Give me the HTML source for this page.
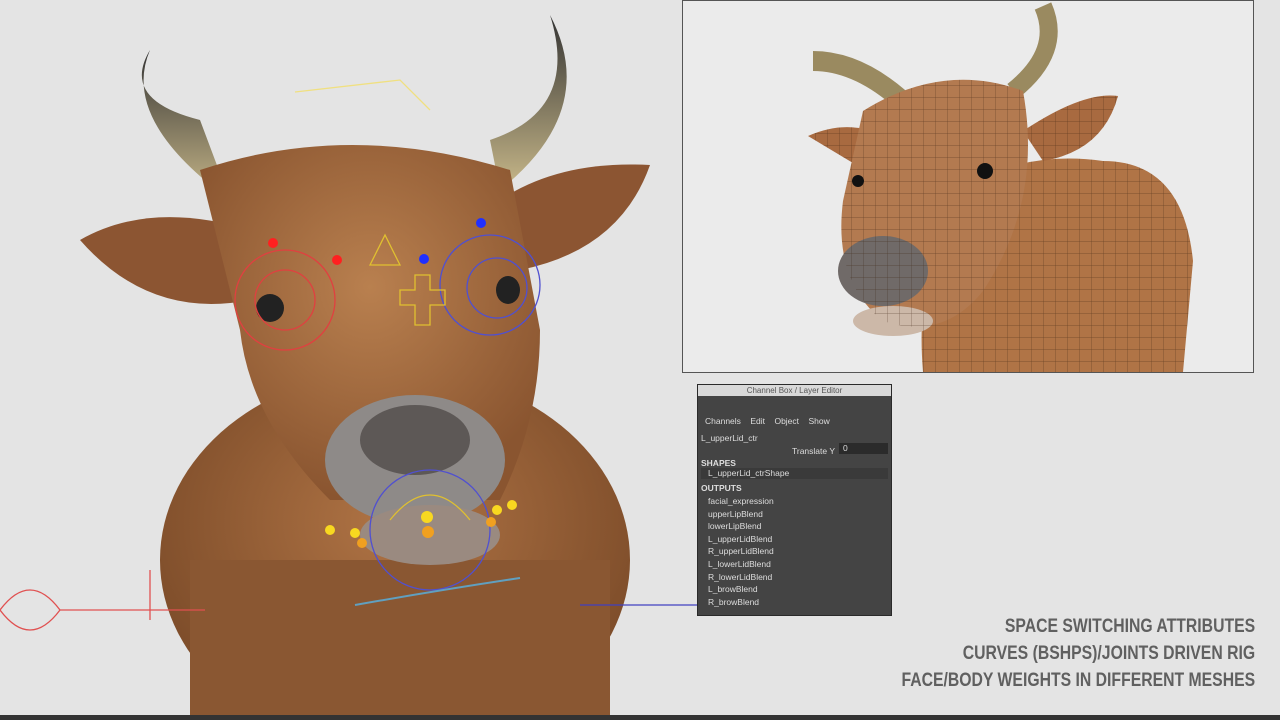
<!DOCTYPE html>
<html><head><meta charset="utf-8"><style>
body{margin:0;width:1280px;height:720px;overflow:hidden;background:#e4e4e4;font-family:"Liberation Sans",sans-serif;position:relative}
svg{position:absolute;left:0;top:0}
#inset{position:absolute;left:682px;top:0;width:570px;height:371px;border:1px solid #555;background:#ebebeb;overflow:hidden}
#cb{position:absolute;left:697px;top:384px;width:193px;height:230px;background:#444;border:1px solid #2a2a2a;color:#ddd;font-size:8.5px}
#cb .tb{height:11px;background:#d9d9d9;color:#555;text-align:center;font-size:8px;line-height:11px}
#cb div.r{position:absolute;left:10px}
#txt{position:absolute;right:25px;top:613px;text-align:right;color:#606060;font-weight:bold;font-size:19px;line-height:27px;transform:scaleX(0.83);transform-origin:right top;white-space:nowrap}
</style></head><body>
<svg width="1280" height="720" viewBox="0 0 1280 720">
<defs>
<radialGradient id="bd" cx="0.5" cy="0.4" r="0.6"><stop offset="0" stop-color="#b07445"/><stop offset="1" stop-color="#7a4a28"/></radialGradient>
<radialGradient id="hd" cx="0.5" cy="0.4" r="0.6"><stop offset="0" stop-color="#b9804f"/><stop offset="1" stop-color="#8a5530"/></radialGradient>
<linearGradient id="hn" x1="0" y1="1" x2="0" y2="0"><stop offset="0" stop-color="#c9b98a"/><stop offset="1" stop-color="#333"/></linearGradient>
</defs>
<ellipse cx="395" cy="560" rx="235" ry="190" fill="url(#bd)"/>
<rect x="190" y="560" width="420" height="160" fill="#8a5732"/>
<path d="M200 120 Q120 100 150 50 Q120 120 230 200 Z" fill="url(#hn)"/>
<path d="M490 140 Q580 110 550 15 Q600 110 500 190 Z" fill="url(#hn)"/>
<path d="M80 240 Q150 200 250 230 L250 300 Q150 320 80 240Z" fill="#8c5532"/>
<path d="M650 165 Q560 160 500 200 L520 270 Q620 250 650 165Z" fill="#8c5532"/>
<path d="M200 170 Q350 120 510 170 L540 330 Q540 420 500 500 L330 500 Q250 420 240 330 Z" fill="url(#hd)"/>
<ellipse cx="415" cy="460" rx="90" ry="65" fill="#8e8a88"/>
<ellipse cx="415" cy="440" rx="55" ry="35" fill="#5d5856"/>
<ellipse cx="430" cy="535" rx="70" ry="30" fill="#9a8a80"/>
<ellipse cx="270" cy="308" rx="14" ry="14" fill="#222"/>
<ellipse cx="508" cy="290" rx="12" ry="14" fill="#222"/>
<g fill="none" stroke-width="1.3">
<circle cx="285" cy="300" r="50" stroke="#e04040"/><circle cx="285" cy="300" r="30" stroke="#e04040"/>
<circle cx="490" cy="285" r="50" stroke="#5050d0"/><circle cx="497" cy="288" r="30" stroke="#5050d0"/>
<circle cx="430" cy="530" r="60" stroke="#5050d0"/>
<path d="M400 290h15v-15h15v15h15v15h-15v20h-15v-20h-15z" stroke="#e0c030"/>
<path d="M370 265l15-30 15 30z" stroke="#e0c030"/>
<path d="M390 520 Q430 470 470 520" stroke="#e0c030"/>
<path d="M355 605 Q440 590 520 578" stroke="#60a0c0" stroke-width="2"/>
<path d="M0 610 Q30 570 60 610 Q30 650 0 610M60 610H205M150 570v50" stroke="#e05050"/>
<path d="M580 605H700" stroke="#4040c0"/>
<path d="M295 92L400 80 430 110" stroke="#f0e080"/>
</g>
<g fill="#ff2020"><circle cx="273" cy="243" r="5"/><circle cx="337" cy="260" r="5"/></g>
<g fill="#2030ff"><circle cx="424" cy="259" r="5"/><circle cx="481" cy="223" r="5"/></g>
<g fill="#f8d820"><circle cx="330" cy="530" r="5"/><circle cx="355" cy="533" r="5"/><circle cx="427" cy="517" r="6"/><circle cx="497" cy="510" r="5"/><circle cx="512" cy="505" r="5"/></g>
<g fill="#f0a020"><circle cx="428" cy="532" r="6"/><circle cx="362" cy="543" r="5"/><circle cx="491" cy="522" r="5"/></g>
<rect x="0" y="715" width="1280" height="5" fill="#333"/>
</svg>
<div id="inset">
<svg width="570" height="371">
<defs><pattern id="g" width="12" height="12" patternUnits="userSpaceOnUse"><path d="M12 0H0V12" fill="none" stroke="#3a2210" stroke-width="0.7"/></pattern>
<clipPath id="cc"><path d="M240 371 Q230 250 290 180 Q350 150 420 160 Q500 160 510 260 L500 371Z"/><path d="M180 110 Q260 60 340 90 Q360 200 300 290 Q260 340 200 320 Q150 280 160 200Z"/><path d="M125 135 Q170 115 210 140 L200 180Z"/><path d="M435 95 Q400 90 340 130 L360 160 Q420 150 435 95Z"/></clipPath></defs>
<path d="M240 371 Q230 250 290 180 Q350 150 420 160 Q500 160 510 260 L500 371Z" fill="#b07446"/>
<path d="M130 60 Q180 60 230 110" stroke="#9a8a60" stroke-width="20" fill="none"/>
<path d="M330 90 Q380 50 360 5" stroke="#9a8a60" stroke-width="18" fill="none"/>
<path d="M125 135 Q170 115 210 140 L200 180Z" fill="#a86a40"/>
<path d="M435 95 Q400 90 340 130 L360 160 Q420 150 435 95Z" fill="#a86a40"/>
<path d="M180 110 Q260 60 340 90 Q360 200 300 290 Q260 340 200 320 Q150 280 160 200Z" fill="#b37a50"/>
<ellipse cx="200" cy="270" rx="45" ry="35" fill="#706a68"/>
<ellipse cx="210" cy="320" rx="40" ry="15" fill="#ccb8a8"/>
<rect width="570" height="371" fill="url(#g)" opacity="0.6" clip-path="url(#cc)"/>
<circle cx="302" cy="170" r="8" fill="#111"/><circle cx="175" cy="180" r="6" fill="#111"/>
</svg>
</div>
<div id="cb">
<div class="tb">Channel Box / Layer Editor</div>
<div class="r" style="left:7px;top:31px">Channels &nbsp;&nbsp; Edit &nbsp;&nbsp; Object &nbsp;&nbsp; Show</div>
<div class="r" style="left:3px;top:48px">L_upperLid_ctr</div>
<div class="r" style="left:94px;top:61px">Translate Y</div>
<div style="position:absolute;left:141px;top:58px;width:45px;height:11px;background:#2b2b2b;padding-left:4px">0</div>
<div class="r" style="left:3px;top:73px;font-weight:bold">SHAPES</div>
<div style="position:absolute;left:3px;top:83px;width:180px;height:11px;background:#3a3a3a;padding-left:7px">L_upperLid_ctrShape</div>
<div class="r" style="left:3px;top:98px;font-weight:bold">OUTPUTS</div>
<div class="r" style="top:110px;line-height:12.6px">facial_expression<br>upperLipBlend<br>lowerLipBlend<br>L_upperLidBlend<br>R_upperLidBlend<br>L_lowerLidBlend<br>R_lowerLidBlend<br>L_browBlend<br>R_browBlend</div>
</div>
<div id="txt">SPACE SWITCHING ATTRIBUTES<br>CURVES (BSHPS)/JOINTS DRIVEN RIG<br>FACE/BODY WEIGHTS IN DIFFERENT MESHES</div>
</body></html>
